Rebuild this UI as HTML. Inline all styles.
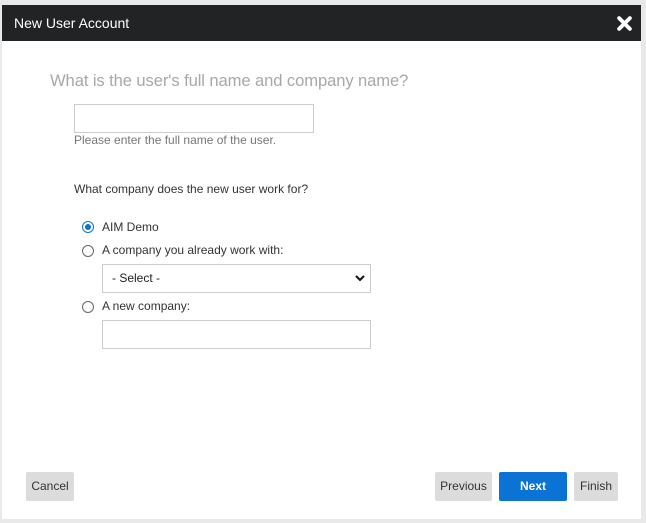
<!DOCTYPE html>
<html><head><style>
body{margin:0;width:646px;height:523px;background:#e9e9e9;font-family:"Liberation Sans",sans-serif;position:relative;overflow:hidden}
.m{position:absolute;left:2px;top:5px;width:639px;height:514px;background:#fff}
.h{position:absolute;left:2px;top:5px;width:639px;height:36px;background:#222325;color:#fff;font-size:14px;line-height:36px}
.h span{position:absolute;left:12px}
.a{position:absolute;font-size:12px;color:#333;white-space:nowrap}
.inp{position:absolute;border:1px solid #ccc;background:#fff;box-sizing:border-box}
.r{position:absolute;width:12px;height:12px;border:1px solid #666;border-radius:50%;box-sizing:border-box;background:#fff}
.btn{position:absolute;top:472px;height:29px;background:#dcdcdc;font-size:12px;color:#333;text-align:center;line-height:29px;border-radius:2px}
</style></head><body>
<div class="m"></div>
<div class="h"><span>New User Account</span>
<svg style="position:absolute;left:615px;top:11px" width="15" height="15" viewBox="0 0 14 14"><path d="M2 2L12 12M12 2L2 12" stroke="#fff" stroke-width="3.6" stroke-linecap="round"/></svg></div>
<div class="a" style="left:50px;top:71px;font-size:16.6px;color:#a8a8a8;letter-spacing:-0.1px">What is the user's full name and company name?</div>
<div class="inp" style="left:74px;top:104px;width:240px;height:29px"></div>
<div class="a" style="left:74px;top:133px;color:#777">Please enter the full name of the user.</div>
<div class="a" style="left:74px;top:182px">What company does the new user work for?</div>
<div class="r" style="left:82px;top:221px;border:1.5px solid #0a73d4"><div style="width:6px;height:6px;margin:1.5px;border-radius:50%;background:#0a73d4"></div></div>
<div class="a" style="left:102px;top:220px">AIM Demo</div>
<div class="r" style="left:82px;top:245px"></div>
<div class="a" style="left:102px;top:243px">A company you already work with:</div>
<div class="inp" style="left:102px;top:264px;width:269px;height:29px;font-size:12px;color:#222;line-height:27px;padding-left:9px">- Select -
<svg style="position:absolute;right:5px;top:10px" width="10" height="7" viewBox="0 0 10 7"><path d="M1 1L5 5L9 1" stroke="#111" stroke-width="2" fill="none"/></svg></div>
<div class="r" style="left:82px;top:301px"></div>
<div class="a" style="left:102px;top:299px">A new company:</div>
<div class="inp" style="left:102px;top:320px;width:269px;height:29px"></div>
<div class="btn" style="left:26px;width:48px">Cancel</div>
<div class="btn" style="left:435px;width:57px">Previous</div>
<div class="btn" style="left:499px;width:68px;background:#0a73d4;color:#fff;font-weight:bold">Next</div>
<div class="btn" style="left:574px;width:44px">Finish</div>
</body></html>
